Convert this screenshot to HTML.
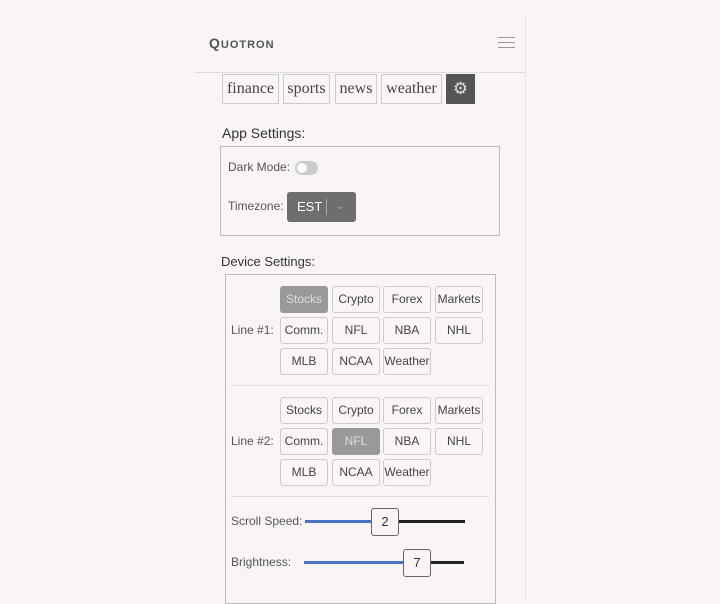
<!DOCTYPE html><html><head><style>
body{margin:0;width:720px;height:600px;background:#f9f5f4;position:relative;overflow:hidden;font-family:"Liberation Sans",sans-serif;color:#555}
.a{position:absolute}
.tab{position:absolute;top:74px;height:30px;border:1px solid #ccc;box-sizing:border-box;font-family:"Liberation Serif",serif;font-size:16px;color:#444;text-align:center;line-height:28px}
.b{position:absolute;width:48px;height:27px;border:1px solid #ccc;border-radius:3px;box-sizing:border-box;font-size:12px;color:#444;text-align:center;line-height:25px;background:#f9f5f4}
.on{background:#999;color:#ddd;border-color:#999}
.lbl{position:absolute;font-size:12px;color:#555}
</style></head><body>
<div class="a" style="left:525px;top:15px;width:1px;height:585px;background:#e6e2e1"></div>
<div class="a" style="left:195px;top:72px;width:330px;height:1px;background:#ddd"></div>
<div class="a" style="left:209px;top:35px;font-size:14px;font-weight:bold;letter-spacing:1px;color:#555">Q<span style="font-size:11px">UOTRON</span></div>
<div class="a" style="left:498px;top:37px;width:17px;height:1px;background:#999;box-shadow:0 5px 0 #999,0 10px 0 #999"></div>
<div class="tab" style="left:222px;width:57px">finance</div>
<div class="tab" style="left:283px;width:47px">sports</div>
<div class="tab" style="left:335px;width:42px">news</div>
<div class="tab" style="left:381px;width:61px">weather</div>
<div class="tab" style="left:446px;width:29px;background:#555;border-color:#555;color:#ddd;font-size:17px;line-height:28px">⚙</div>
<div class="a" style="left:222px;top:125px;font-size:14px;color:#333">App Settings:</div>
<div class="a" style="left:220px;top:146px;width:280px;height:90px;border:1px solid #bbb;box-sizing:border-box"></div>
<div class="lbl" style="left:228px;top:160px">Dark Mode:</div>
<div class="a" style="left:295px;top:161px;width:23px;height:14px;border-radius:7px;background:#ccc"><div class="a" style="left:2px;top:2px;width:10px;height:10px;border-radius:5px;background:#fff"></div></div>
<div class="lbl" style="left:228px;top:199px">Timezone:</div>
<div class="a" style="left:287px;top:192px;width:69px;height:30px;border-radius:3px;background:#6e6e6e;color:#fff;font-size:13px;line-height:30px"><span style="margin-left:10px">EST</span><span class="a" style="left:39px;top:7px;width:1px;height:16px;background:#aaa"></span><span class="a" style="left:49px;top:0;color:#aaa;font-size:10px">⌄</span></div>
<div class="a" style="left:221px;top:254px;font-size:13px;color:#333">Device Settings:</div>
<div class="a" style="left:225px;top:274px;width:271px;height:330px;border:1px solid #bbb;box-sizing:border-box"></div>
<div class="lbl" style="left:231px;top:323px">Line #1:</div>
<div class="lbl" style="left:231px;top:434px">Line #2:</div>
<div class="b on" style="left:280px;top:286px">Stocks</div><div class="b" style="left:332px;top:286px">Crypto</div><div class="b" style="left:383px;top:286px">Forex</div><div class="b" style="left:435px;top:286px">Markets</div>
<div class="b" style="left:280px;top:317px">Comm.</div><div class="b" style="left:332px;top:317px">NFL</div><div class="b" style="left:383px;top:317px">NBA</div><div class="b" style="left:435px;top:317px">NHL</div>
<div class="b" style="left:280px;top:348px">MLB</div><div class="b" style="left:332px;top:348px">NCAA</div><div class="b" style="left:383px;top:348px">Weather</div>
<div class="a" style="left:231px;top:385px;width:258px;height:1px;background:#ddd"></div>
<div class="b" style="left:280px;top:397px">Stocks</div><div class="b" style="left:332px;top:397px">Crypto</div><div class="b" style="left:383px;top:397px">Forex</div><div class="b" style="left:435px;top:397px">Markets</div>
<div class="b" style="left:280px;top:428px">Comm.</div><div class="b on" style="left:332px;top:428px">NFL</div><div class="b" style="left:383px;top:428px">NBA</div><div class="b" style="left:435px;top:428px">NHL</div>
<div class="b" style="left:280px;top:459px">MLB</div><div class="b" style="left:332px;top:459px">NCAA</div><div class="b" style="left:383px;top:459px">Weather</div>
<div class="a" style="left:231px;top:496px;width:258px;height:1px;background:#ddd"></div>
<div class="lbl" style="left:231px;top:514px">Scroll Speed:</div>
<div class="a" style="left:305px;top:520px;width:70px;height:3px;background:#4a72c4"></div>
<div class="a" style="left:395px;top:520px;width:70px;height:3px;background:#222"></div>
<div class="a" style="left:371px;top:508px;width:28px;height:28px;border:1px solid #666;border-radius:3px;background:#f9f5f4;box-sizing:border-box;text-align:center;line-height:26px;font-size:13px;color:#333">2</div>
<div class="lbl" style="left:231px;top:555px">Brightness:</div>
<div class="a" style="left:304px;top:561px;width:102px;height:3px;background:#4a72c4"></div>
<div class="a" style="left:428px;top:561px;width:36px;height:3px;background:#222"></div>
<div class="a" style="left:403px;top:549px;width:28px;height:28px;border:1px solid #666;border-radius:3px;background:#f9f5f4;box-sizing:border-box;text-align:center;line-height:26px;font-size:13px;color:#333">7</div>
</body></html>
